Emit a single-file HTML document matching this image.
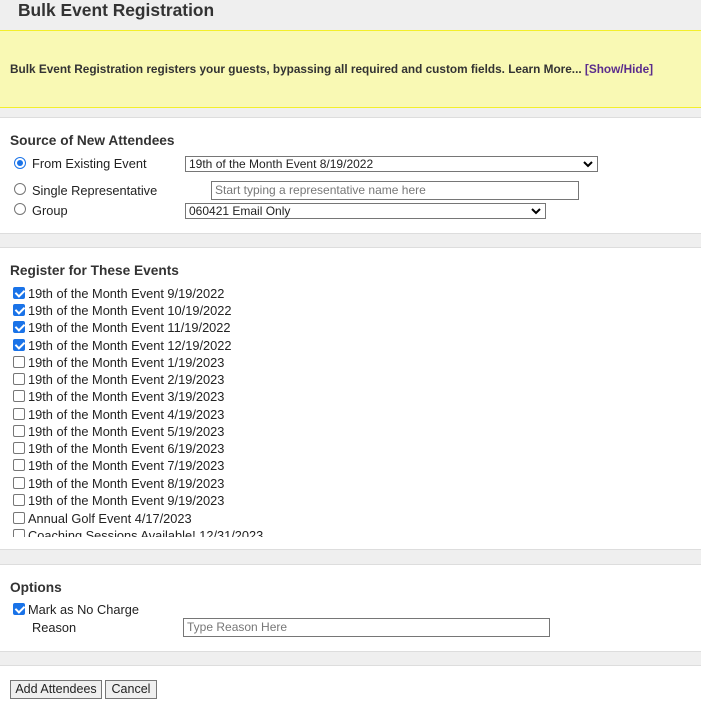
<!DOCTYPE html>
<html><head><style>
*{margin:0;padding:0;box-sizing:border-box}
body{width:701px;height:711px;position:relative;background:#fff;font-family:"Liberation Sans",Arial,sans-serif;color:#222;font-size:12.5px;overflow:hidden}
.a{position:absolute}
.band{position:absolute;left:0;width:701px;background:#efefef}
h2{position:absolute;font-size:13.7px;font-weight:bold;color:#333}
.rad{position:absolute;width:12px;height:12px;border:1px solid #767676;border-radius:50%;background:#fff}
.rad.on{border:1px solid #1a73e8}
.rad.on:after{content:"";position:absolute;left:2px;top:2px;width:6px;height:6px;border-radius:50%;background:#1a73e8}
.cb{position:absolute;width:12px;height:12px;border:1px solid #767676;border-radius:2px;background:#fff}
.cb.on{background:#1a73e8;border-color:#1a73e8}
.cb.on:after{content:"";position:absolute;left:3px;top:0px;width:4px;height:7px;border:solid #fff;border-width:0 2px 2px 0;transform:rotate(45deg)}
.sel,.inp{position:absolute;border:1px solid #767676;background:#fff;height:16px;font-size:12px;line-height:14px;padding-left:3px}
.inp{color:#777;height:19px;line-height:17px}
.sel svg{position:absolute;right:4px;top:4px}
.lbl{position:absolute;font-size:12.8px;line-height:14px}
.btn{position:absolute;top:680px;height:19px;border:1px solid #767676;background:#efefef;font-size:12.5px;line-height:17px;text-align:center}
</style></head><body>
<div class="band" style="top:0;height:30px"></div>
<div class="a" style="left:18px;top:0px;font-size:17.4px;font-weight:bold;color:#333">Bulk Event Registration</div>
<div class="a" style="left:0;top:30px;width:701px;height:78px;background:#f9f9b4;border-top:1px solid #f3ef2a;border-bottom:1px solid #f3ef2a"></div>
<div class="a" style="left:10px;top:62px;font-size:11.8px;font-weight:bold;color:#333">Bulk Event Registration registers your guests, bypassing all required and custom fields. Learn More... <span style="color:#5b2d8c">[Show/Hide]</span></div>
<div class="band" style="top:108px;height:10px;border-bottom:1px solid #ddd"></div>

<h2 style="left:10px;top:133px">Source of New Attendees</h2>
<div class="rad on" style="left:14px;top:157px"></div><div class="lbl" style="left:32px;top:157px">From Existing Event</div>
<div class="sel" style="left:185px;top:156px;width:413px">19th of the Month Event 8/19/2022<svg width="10" height="7" viewBox="0 0 10 7"><path d="M1 1l4 4 4-4" stroke="#000" stroke-width="2" fill="none"/></svg></div>
<div class="rad" style="left:14px;top:183px"></div><div class="lbl" style="left:32px;top:184px">Single Representative</div>
<div class="inp" style="left:211px;top:181px;width:368px">Start typing a representative name here</div>
<div class="rad" style="left:14px;top:203px"></div><div class="lbl" style="left:32px;top:204px">Group</div>
<div class="sel" style="left:185px;top:203px;width:361px">060421 Email Only<svg width="10" height="7" viewBox="0 0 10 7"><path d="M1 1l4 4 4-4" stroke="#000" stroke-width="2" fill="none"/></svg></div>

<div class="band" style="top:233px;height:15px;border-top:1px solid #ddd;border-bottom:1px solid #ddd"></div>
<h2 style="left:10px;top:263px">Register for These Events</h2>
<div class="a" style="left:0;top:284px;width:701px;height:253px;overflow:hidden">
<div class="cb on" style="left:13px;top:3px"></div><div class="lbl" style="left:28px;top:3px">19th of the Month Event 9/19/2022</div>
<div class="cb on" style="left:13px;top:20px"></div><div class="lbl" style="left:28px;top:20px">19th of the Month Event 10/19/2022</div>
<div class="cb on" style="left:13px;top:37px"></div><div class="lbl" style="left:28px;top:37px">19th of the Month Event 11/19/2022</div>
<div class="cb on" style="left:13px;top:55px"></div><div class="lbl" style="left:28px;top:55px">19th of the Month Event 12/19/2022</div>
<div class="cb" style="left:13px;top:72px"></div><div class="lbl" style="left:28px;top:72px">19th of the Month Event 1/19/2023</div>
<div class="cb" style="left:13px;top:89px"></div><div class="lbl" style="left:28px;top:89px">19th of the Month Event 2/19/2023</div>
<div class="cb" style="left:13px;top:106px"></div><div class="lbl" style="left:28px;top:106px">19th of the Month Event 3/19/2023</div>
<div class="cb" style="left:13px;top:124px"></div><div class="lbl" style="left:28px;top:124px">19th of the Month Event 4/19/2023</div>
<div class="cb" style="left:13px;top:141px"></div><div class="lbl" style="left:28px;top:141px">19th of the Month Event 5/19/2023</div>
<div class="cb" style="left:13px;top:158px"></div><div class="lbl" style="left:28px;top:158px">19th of the Month Event 6/19/2023</div>
<div class="cb" style="left:13px;top:175px"></div><div class="lbl" style="left:28px;top:175px">19th of the Month Event 7/19/2023</div>
<div class="cb" style="left:13px;top:193px"></div><div class="lbl" style="left:28px;top:193px">19th of the Month Event 8/19/2023</div>
<div class="cb" style="left:13px;top:210px"></div><div class="lbl" style="left:28px;top:210px">19th of the Month Event 9/19/2023</div>
<div class="cb" style="left:13px;top:228px"></div><div class="lbl" style="left:28px;top:228px">Annual Golf Event 4/17/2023</div>
<div class="cb" style="left:13px;top:245px"></div><div class="lbl" style="left:28px;top:245px">Coaching Sessions Available! 12/31/2023</div>
</div>

<div class="band" style="top:549px;height:16px;border-top:1px solid #ddd;border-bottom:1px solid #ddd"></div>
<h2 style="left:10px;top:580px">Options</h2>
<div class="cb on" style="left:13px;top:603px"></div><div class="lbl" style="left:28px;top:603px">Mark as No Charge</div>
<div class="lbl" style="left:32px;top:621px">Reason</div>
<div class="inp" style="left:183px;top:618px;width:367px">Type Reason Here</div>

<div class="band" style="top:651px;height:15px;border-top:1px solid #ddd;border-bottom:1px solid #ddd"></div>
<div class="btn" style="left:10px;width:92px">Add Attendees</div>
<div class="btn" style="left:105px;width:52px">Cancel</div>
</body></html>
